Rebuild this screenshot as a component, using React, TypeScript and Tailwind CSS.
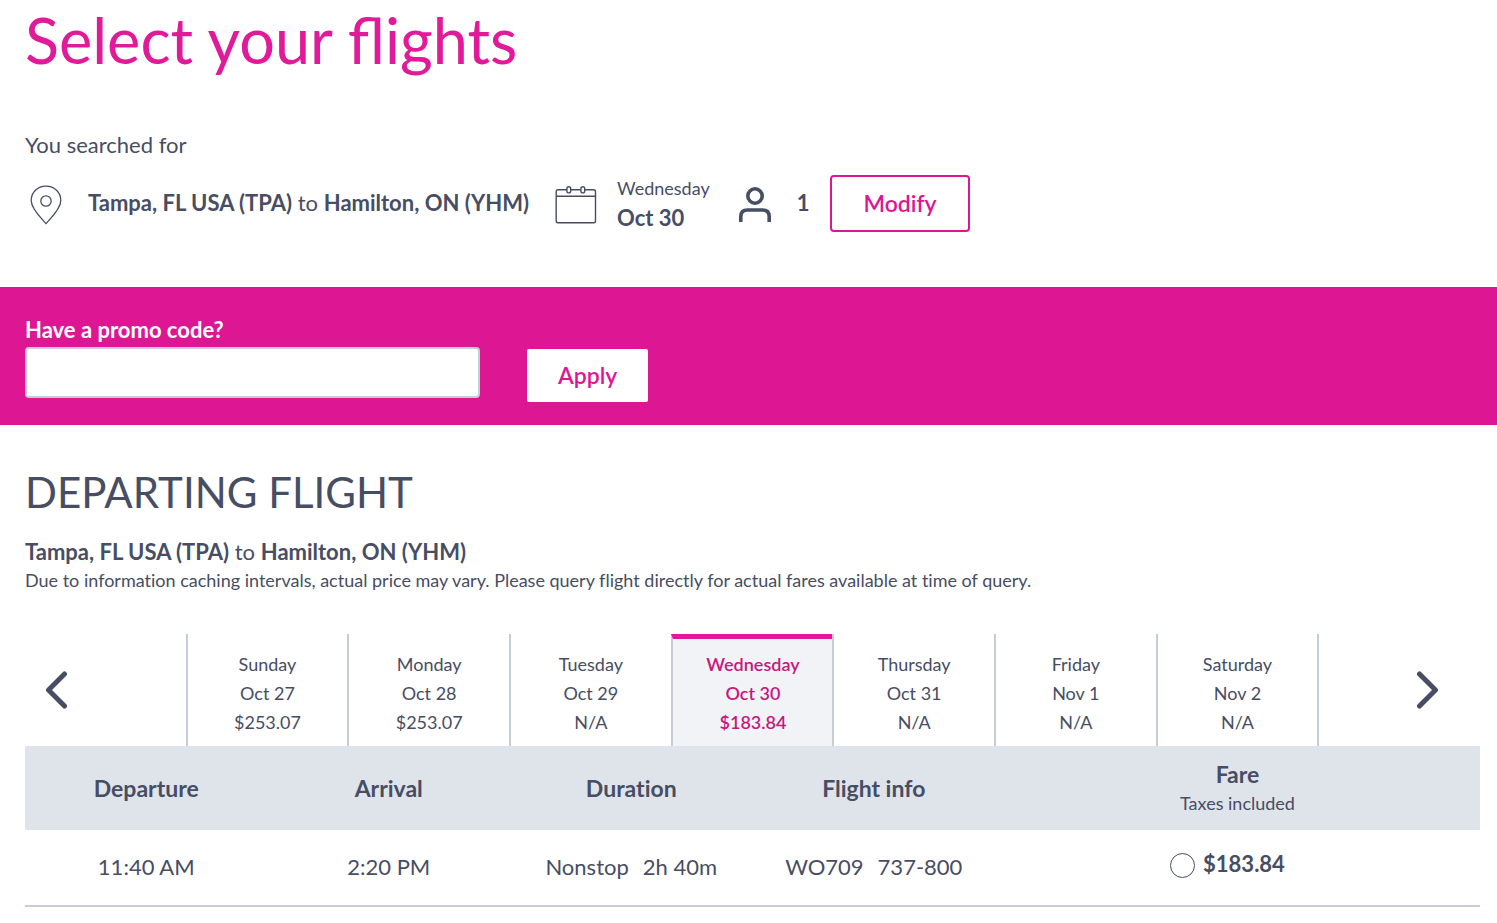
import { useState } from "react";

interface FareDay {
  weekday: string;
  date: string;
  price: string;
}

interface Flight {
  departure: string;
  arrival: string;
  stops: string;
  duration: string;
  number: string;
  aircraft: string;
  fare: string;
}

const days: FareDay[] = [
  { weekday: "Sunday", date: "Oct 27", price: "$253.07" },
  { weekday: "Monday", date: "Oct 28", price: "$253.07" },
  { weekday: "Tuesday", date: "Oct 29", price: "N/A" },
  { weekday: "Wednesday", date: "Oct 30", price: "$183.84" },
  { weekday: "Thursday", date: "Oct 31", price: "N/A" },
  { weekday: "Friday", date: "Nov 1", price: "N/A" },
  { weekday: "Saturday", date: "Nov 2", price: "N/A" },
];

const flights: Flight[] = [
  {
    departure: "11:40 AM",
    arrival: "2:20 PM",
    stops: "Nonstop",
    duration: "2h 40m",
    number: "WO709",
    aircraft: "737-800",
    fare: "$183.84",
  },
];

function PinIcon() {
  return (
    <svg className="h-10 w-8" viewBox="0 0 32 40" fill="none" stroke="currentColor" strokeWidth="1.3" aria-hidden="true">
      <path d="M16 38.6 C12.5 34.5 1.2 24.5 1.2 15.6 C1.2 7.2 7.6 1.2 16 1.2 C24.4 1.2 30.8 7.2 30.8 15.6 C30.8 24.5 19.5 34.5 16 38.6 Z" />
      <circle cx="16" cy="16" r="5.2" />
    </svg>
  );
}

function CalendarIcon() {
  return (
    <svg className="h-10 w-[42px]" viewBox="0 0 42 40" fill="none" stroke="currentColor" strokeWidth="1.4" aria-hidden="true">
      <path d="M12 4.7 H3 Q1.2 4.7 1.2 6.5 V36 Q1.2 37.8 3 37.8 H38.7 Q40.5 37.8 40.5 36 V6.5 Q40.5 4.7 38.7 4.7 H29.8 M15.6 4.7 H25.8 M1.2 11.2 H40.5" />
      <rect x="11.9" y="1.7" width="3.8" height="6.2" rx="1.9" />
      <rect x="25.9" y="1.7" width="3.8" height="6.2" rx="1.9" />
    </svg>
  );
}

function PersonIcon() {
  return (
    <svg className="h-9 w-8" viewBox="0 0 32 36" fill="none" stroke="currentColor" strokeWidth="3.6" aria-hidden="true">
      <circle cx="16" cy="9" r="7.2" />
      <path d="M1.8 35 V29.5 Q1.8 23 8.5 23 H23.5 Q30.2 23 30.2 29.5 V35" />
    </svg>
  );
}

function ArrowIcon({ className }: { className?: string }) {
  return (
    <svg className={className} width="23" height="38" viewBox="0 0 23 38" fill="none" stroke="currentColor" strokeWidth="5" strokeLinecap="round" strokeLinejoin="round" aria-hidden="true">
      <path d="M19.5 3 L3.5 19 L19.5 35" />
    </svg>
  );
}

function Route() {
  return (
    <>
      <span className="font-bold">Tampa, FL USA (TPA)</span> to{" "}
      <span className="font-bold">Hamilton, ON (YHM)</span>
    </>
  );
}

export default function App() {
  const [selectedDay, setSelectedDay] = useState(3);
  const [promo, setPromo] = useState("");

  return (
    <main className="min-h-screen bg-white font-['Lato',sans-serif] text-[22px] leading-[29px] text-[#474d63]">
      <section className="px-[25px] pb-[55px]">
        <h1 className="text-[63px] leading-[79px] text-[#e01a98]">Select your flights</h1>
        <p className="pt-[51px]">You searched for</p>
        <div className="flex flex-wrap items-center gap-x-[26px] pt-[15px]">
          <div className="flex items-center gap-[26px] pt-1 pl-[5px]">
            <PinIcon />
            <p className="pb-[6px]">
              <Route />
            </p>
          </div>
          <div className="flex items-center gap-5">
            <div className="pt-1">
              <CalendarIcon />
            </div>
            <p>
              <span className="block text-[18px]">Wednesday</span>
              <span className="block font-bold">Oct 30</span>
            </p>
          </div>
          <div className="ml-[3px] flex items-center gap-[26px] pt-1">
            <PersonIcon />
            <p className="pb-[6px] font-bold">1</p>
          </div>
          <button type="button" className="-ml-[5px] rounded border-2 border-[#dd1793] px-[31px] py-3 text-[23px] font-semibold text-[#dd1793]">
            Modify
          </button>
        </div>
      </section>

      <form className="flex flex-wrap items-end gap-x-[47px] bg-[#dd1793] px-[25px] pt-7 pb-[23px]" onSubmit={(e) => e.preventDefault()}>
        <div className="w-[455px] pb-1">
          <label htmlFor="promo" className="block font-bold text-white">
            Have a promo code?
          </label>
          <input
            id="promo"
            type="text"
            value={promo}
            onChange={(e) => setPromo(e.target.value)}
            className="mt-[3px] block h-[51px] w-full rounded border-2 border-[#c7cdd8] bg-white px-3"
          />
        </div>
        <button type="submit" className="rounded-xs bg-white px-[31px] py-3 text-[23px] font-semibold text-[#dd1793]">
          Apply
        </button>
      </form>

      <section className="pt-[42px] pr-[17px] pl-[25px] [font-variant-ligatures:none]">
        <h2 className="text-[42px] leading-[50px]">DEPARTING FLIGHT</h2>
        <p className="pt-5">
          <Route />
        </p>
        <p className="text-[18px]">
          Due to information caching intervals, actual price may vary. Please query flight directly for actual fares available at time of query.
        </p>

        <div className="mt-[39px] grid h-28 grid-cols-9 text-[18px]">
          <button type="button" aria-label="Previous days" className="pl-5">
            <ArrowIcon />
          </button>
          {days.map((day, i) => (
            <button
              key={day.date}
              type="button"
              onClick={() => setSelectedDay(i)}
              className={
                i === selectedDay
                  ? "-mr-px -ml-px border-t-5 border-l-2 border-[#c7cdd8] border-t-[#e01a98] bg-[#f1f3f7] pt-[2px] pr-px font-semibold text-[#c9177f]"
                  : "-ml-px border-l-2 border-[#c7cdd8] pt-[7px] pr-px"
              }
            >
              <span className="block">{day.weekday}</span>
              <span className="block">{day.date}</span>
              <span className="block">{day.price}</span>
            </button>
          ))}
          <button type="button" aria-label="Next days" className="-ml-px flex items-center justify-end border-l-2 border-[#c7cdd8] pr-[41px]">
            <ArrowIcon className="rotate-180" />
          </button>
        </div>

        <table className="w-full table-fixed text-center">
          <thead>
            <tr className="h-[84px] bg-[#dfe4eb] text-[23px]">
              <th className="w-1/6 font-bold">Departure</th>
              <th className="w-1/6 font-bold">Arrival</th>
              <th className="w-1/6 font-bold">Duration</th>
              <th className="w-1/6 font-bold">Flight info</th>
              <th className="w-1/3 pt-px font-bold">
                Fare
                <span className="block text-[18px] font-normal">Taxes included</span>
              </th>
            </tr>
          </thead>
          <tbody>
            {flights.map((flight) => (
              <tr key={flight.number} className="h-[76px] border-b-2 border-[#c7cdd8]">
                <td className="pb-[2px]">{flight.departure}</td>
                <td className="pb-[2px]">{flight.arrival}</td>
                <td className="pb-[2px]">
                  <span className="mr-3.5">{flight.stops}</span>
                  {flight.duration}
                </td>
                <td className="pb-[2px]">
                  <span className="mr-3.5">{flight.number}</span>
                  {flight.aircraft}
                </td>
                <td className="pb-[2px]">
                  <label className="inline-flex items-center gap-2 pr-5 font-bold">
                    <input
                      type="radio"
                      name="fare"
                      className="h-[25px] w-[25px] appearance-none rounded-full border border-[#474d63] checked:border-8"
                    />
                    <span className="pb-1">{flight.fare}</span>
                  </label>
                </td>
              </tr>
            ))}
          </tbody>
        </table>
      </section>
    </main>
  );
}
